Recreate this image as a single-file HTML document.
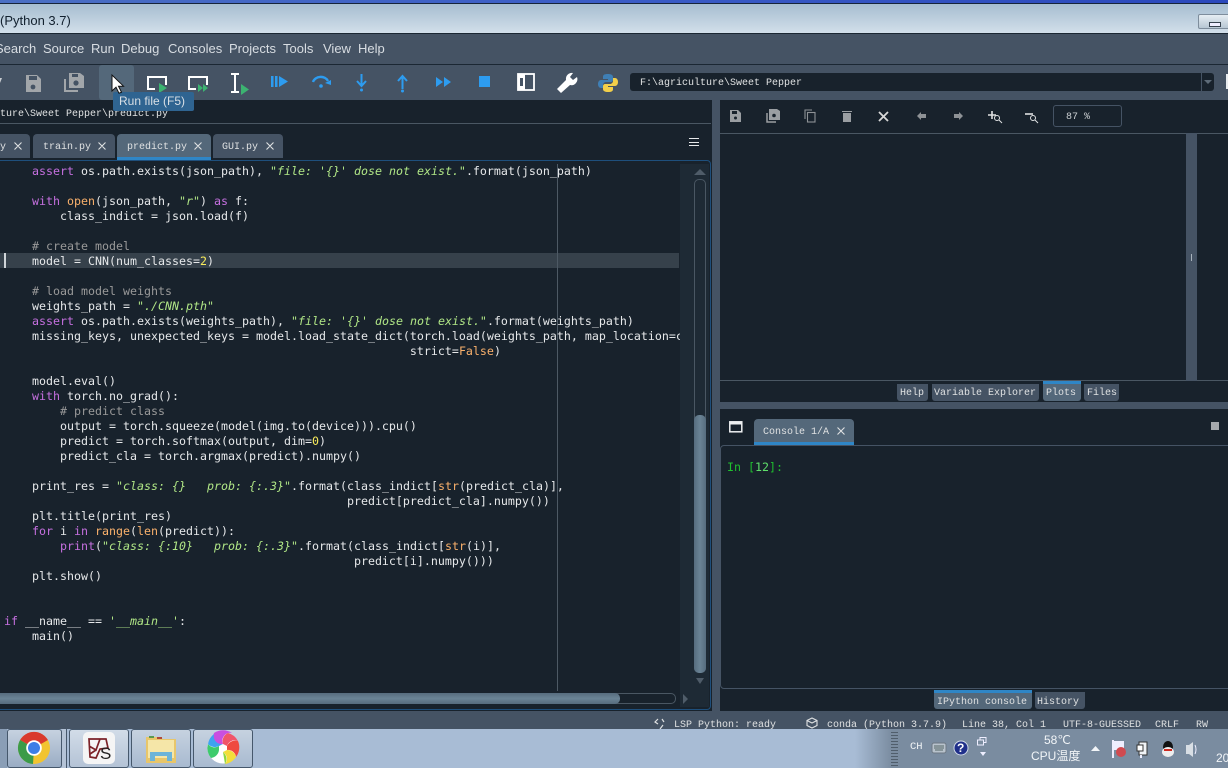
<!DOCTYPE html>
<html><head><meta charset="utf-8"><style>
html,body{margin:0;padding:0;background:#18222c}
body{width:1228px;height:768px;overflow:hidden;position:relative;font-family:"Liberation Sans",sans-serif}
.a{position:absolute}
.m{position:absolute;top:41px;font-size:13px;color:#d8dde2;line-height:15px;white-space:nowrap}
.t{font-family:"Liberation Mono",monospace;font-size:10px;color:#dfe1e2;white-space:pre;position:absolute;line-height:14px;margin-top:2px}
.tab{position:absolute;background:#455364;border-radius:4px 4px 0 0}
.btab{position:absolute;background:#455364;border-radius:0 0 3px 3px;height:17px;top:384px}
pre{margin:0;position:absolute;left:4px;top:164px;font-family:"DejaVu Sans Mono",monospace;font-size:11.63px;line-height:15px;color:#e6e8ea;width:676px;overflow:hidden;height:500px}
i.s{color:#b0e686;font-style:italic}
b.k{color:#c670e0;font-weight:normal}
b.o{color:#fab16c;font-weight:normal}
b.c{color:#999;font-weight:normal}
b.n{color:#faed5c;font-weight:normal}
svg{position:absolute;overflow:visible}
</style></head><body>

<!-- top window strip -->
<div class="a" style="left:0;top:0;width:1228px;height:3px;background:linear-gradient(90deg,#4a6fc4,#3a5cc6 50%,#2a48bc)"></div>
<div class="a" style="left:0;top:3px;width:1228px;height:1px;background:#16243a"></div>
<div class="a" style="left:0;top:4px;width:1228px;height:29px;background:linear-gradient(180deg,#a6bdd0,#d2dfea)"></div>
<div class="a" style="left:0;top:13px;font-size:13px;color:#12202e;line-height:16px">(Python 3.7)</div>
<div class="a" style="left:1198px;top:14px;width:32px;height:15px;border:1px solid #7e8d9c;border-radius:2px;background:linear-gradient(#e6edf3,#b7c6d3);box-sizing:border-box"></div>
<div class="a" style="left:1209px;top:22px;width:10px;height:3px;border:1px solid #36424e;background:#eef"></div>

<!-- menu bar -->
<div class="a" style="left:0;top:33px;width:1228px;height:32px;background:#455364;border-top:1px solid #1b2733;border-bottom:1px solid #1b2733;box-sizing:border-box"></div>
<div class="m" style="left:-5px">Search</div>
<div class="m" style="left:43px">Source</div>
<div class="m" style="left:91px">Run</div>
<div class="m" style="left:121px">Debug</div>
<div class="m" style="left:168px">Consoles</div>
<div class="m" style="left:229px">Projects</div>
<div class="m" style="left:283px">Tools</div>
<div class="m" style="left:323px">View</div>
<div class="m" style="left:358px">Help</div>

<!-- toolbar -->
<div class="a" style="left:0;top:65px;width:1228px;height:35px;background:#455364"></div>
<div class="a" style="left:99px;top:65px;width:35px;height:35px;background:#54687a;border-radius:3px"></div>
<svg style="left:0;top:65px" width="1228" height="35">
<path d="M-2 13h4l-2 5z" fill="#c8ccd0"/>
<path d="M26 10h11l4 4v13H26z" fill="#a2a6aa"/><rect x="29" y="11" width="8" height="4" fill="#455364"/><circle cx="33" cy="22" r="2.4" fill="#455364"/>
<path d="M65 14v12h13" fill="none" stroke="#a2a6aa" stroke-width="2"/><path d="M69 8h11l4 3v12H69z" fill="#a2a6aa"/><circle cx="76" cy="18" r="2.6" fill="#455364"/><rect x="72" y="9" width="6" height="3" fill="#455364"/>
<path d="M155 24h-7V12h18v8" fill="none" stroke="#fff" stroke-width="2"/><path d="M159 18l8 5-8 5z" fill="#3cb371"/>
<path d="M196 24h-7V12h18v8" fill="none" stroke="#fff" stroke-width="2"/><path d="M198 19l5 4-5 4zM203 19l5 4-5 4z" fill="#3cb371"/>
<path d="M231 9h8M235 9v18M231 27h8" fill="none" stroke="#fff" stroke-width="2"/><path d="M241 19l8 5.500-8 5.500z" fill="#3cb371"/>
<path d="M271 11h2.500v11H271zM275 11h2.500v11H275zM279 11l9 5.500-9 5.500z" fill="#2d9cf0"/>
<path d="M313 17a8 7 0 0 1 15-1" fill="none" stroke="#2d9cf0" stroke-width="2.400"/><path d="M325 18l6-3v5z" fill="#2d9cf0"/><circle cx="321" cy="21" r="1.800" fill="#2d9cf0"/>
<path d="M361.500 9v12M357 16l4.500 5 4.500-5" fill="none" stroke="#2d9cf0" stroke-width="2"/><circle cx="361.500" cy="25" r="1.500" fill="#2d9cf0"/>
<path d="M402.500 24V11M398 16l4.500-5 4.500 5" fill="none" stroke="#2d9cf0" stroke-width="2"/><circle cx="402.500" cy="26" r="1.500" fill="#2d9cf0"/>
<path d="M436 12l7 5-7 5zM444 12l7 5-7 5z" fill="#2d9cf0"/>
<rect x="479" y="11" width="11" height="11" fill="#2d9cf0"/>
<rect x="518" y="9" width="16" height="16" fill="none" stroke="#fff" stroke-width="1.800"/><rect x="518" y="9" width="7" height="16" fill="#fff"/><rect x="520" y="13" width="3" height="8" fill="#455364"/>
<path d="M557 25l9-9a6 6 0 0 1 7-7l-3 4 3 3 4-3a6 6 0 0 1-7 8l-9 8z" fill="#fff" transform="translate(0,-1)"/>
<path d="M608 9c-4 0-5 1-5 3v2h5v1h-7c-2 0-3 2-3 4s1 4 3 4h2v-3c0-2 2-3 3-3h5c1 0 2-1 2-2v-3c0-2-2-3-5-3z" fill="#3f7fb5"/>
<path d="M608 27c4 0 5-1 5-3v-2h-5v-1h7c2 0 3-2 3-4s-1-4-3-4h-2v3c0 2-2 3-3 3h-5c-1 0-2 1-2 2v3c0 2 2 3 5 3z" fill="#f2cf4a"/>
</svg>
<div class="a" style="left:630px;top:73px;width:584px;height:18px;background:#18222c;border-radius:3px"></div>
<div class="a" style="left:1201px;top:73px;width:1px;height:18px;background:#455364"></div>
<svg style="left:1204px;top:80px" width="10" height="6"><path d="M0 0h8l-4 4z" fill="#5d6b78"/></svg>
<div class="a" style="left:1226px;top:74px;width:4px;height:15px;background:#e8ecef"></div>
<div class="t" style="left:640px;top:75px">F:\agriculture\Sweet Pepper</div>

<!-- left path bar -->
<div class="a" style="left:0;top:100px;width:711px;height:24px;background:#18222c;border-bottom:1px solid #4a5763;box-sizing:border-box"></div>
<div class="t" style="left:0;top:106px">ture\Sweet Pepper\predict.py</div>
<div class="a" style="left:113px;top:92px;width:81px;height:19px;background:#2f6491;border-radius:2px;color:#d9dfe5;font-size:12px;line-height:18px;text-indent:6px;white-space:nowrap">Run file (F5)</div>
<svg style="left:110px;top:74px" width="16" height="20"><path d="M2 1v16l4-3.800 3 6 2.500-1-3-6h5z" fill="#fff" stroke="#111" stroke-width="1"/></svg>

<!-- tabs -->
<div class="tab" style="left:-8px;top:134px;width:38px;height:24px"></div>
<div class="tab" style="left:33px;top:134px;width:82px;height:24px"></div>
<div class="tab" style="left:117px;top:134px;width:94px;height:24px;background:#54687a"></div>
<div class="a" style="left:117px;top:157px;width:94px;height:3px;background:#2f86c6"></div>
<div class="tab" style="left:213px;top:134px;width:70px;height:24px"></div>
<div class="t" style="left:0;top:139px">y</div><div class="t" style="left:43px;top:139px">train.py</div><div class="t" style="left:127px;top:139px">predict.py</div><div class="t" style="left:222px;top:139px">GUI.py</div>
<svg style="left:0;top:142px" width="290" height="8" stroke="#dfe1e2" stroke-width="1.100" fill="none"><path d="M14.500.5l7 7m0-7l-7 7M98.500.5l7 7m0-7l-7 7M194.500.5l7 7m0-7l-7 7M266.500.5l7 7m0-7l-7 7"/></svg>
<div class="a" style="left:689px;top:138px;width:10px;height:1px;background:#e6e8ea;box-shadow:0 4px 0 #e6e8ea,0 7px 0 #e6e8ea"></div>

<!-- editor -->
<div class="a" style="left:-4px;top:160px;width:715px;height:550px;border:1px solid #1e4f7c;border-radius:4px;box-sizing:border-box"></div>
<div class="a" style="left:680px;top:164px;width:29px;height:543px;background:#1e2a35"></div>
<div class="a" style="left:0;top:253px;width:679px;height:15px;background:#36414b"></div>
<div class="a" style="left:4px;top:253px;width:2px;height:15px;background:#cfd4d8"></div>
<div class="a" style="left:557px;top:164px;width:1px;height:527px;background:#4d5964"></div>
<pre>    <b class="k">assert</b> os.path.exists(json_path), <i class="s">"file: '{}' dose not exist."</i>.format(json_path)

    <b class="k">with</b> <b class="o">open</b>(json_path, <i class="s">"r"</i>) <b class="k">as</b> f:
        class_indict = json.load(f)

    <b class="c"># create model</b>
    model = CNN(num_classes=<b class="n">2</b>)

    <b class="c"># load model weights</b>
    weights_path = <i class="s">"./CNN.pth"</i>
    <b class="k">assert</b> os.path.exists(weights_path), <i class="s">"file: '{}' dose not exist."</i>.format(weights_path)
    missing_keys, unexpected_keys = model.load_state_dict(torch.load(weights_path, map_location=c
                                                          strict=<b class="o">False</b>)

    model.eval()
    <b class="k">with</b> torch.no_grad():
        <b class="c"># predict class</b>
        output = torch.squeeze(model(img.to(device))).cpu()
        predict = torch.softmax(output, dim=<b class="n">0</b>)
        predict_cla = torch.argmax(predict).numpy()

    print_res = <i class="s">"class: {}   prob: {:.3}"</i>.format(class_indict[<b class="o">str</b>(predict_cla)],
                                                 predict[predict_cla].numpy())
    plt.title(print_res)
    <b class="k">for</b> i <b class="k">in</b> <b class="o">range</b>(<b class="o">len</b>(predict)):
        <b class="k">print</b>(<i class="s">"class: {:10}   prob: {:.3}"</i>.format(class_indict[<b class="o">str</b>(i)],
                                                  predict[i].numpy()))
    plt.show()


<b class="k">if</b> __name__ == <i class="s">'__main__'</i>:
    main()</pre>
<!-- scrollbars -->
<svg style="left:694px;top:168px" width="12" height="8"><path d="M0 7l6-6 6 6z" fill="#4f5c69"/></svg>
<div class="a" style="left:694px;top:179px;width:12px;height:494px;border:1px solid #4a5763;border-radius:5px;box-sizing:border-box"></div>
<div class="a" style="left:694px;top:415px;width:12px;height:258px;background:linear-gradient(90deg,#566c7e,#6a8395 50%,#566c7e);border-radius:5px"></div>
<svg style="left:694px;top:677px" width="12" height="8"><path d="M2 1l4 6 4-6z" fill="#4f5c69"/></svg>
<div class="a" style="left:-5px;top:693px;width:681px;height:11px;border:1px solid #4a5763;border-radius:5px;box-sizing:border-box"></div>
<div class="a" style="left:-5px;top:693px;width:625px;height:11px;background:linear-gradient(#566c7e,#6a8395 50%,#566c7e);border-radius:5px"></div>
<svg style="left:683px;top:694px" width="6" height="10"><path d="M0 0l5 5-5 5z" fill="#4f5c69"/></svg>

<!-- splitter -->
<div class="a" style="left:712px;top:100px;width:8px;height:611px;background:#455364"></div>

<!-- plots pane -->
<div class="a" style="left:720px;top:100px;width:508px;height:305px;background:#18222c"></div>
<svg style="left:729px;top:109px" width="320" height="16">
<path d="M1 1h8l3 3v9H1z" fill="#9a9ea2"/><rect x="3" y="2" width="5" height="3" fill="#18222c"/><circle cx="6.500" cy="9" r="1.500" fill="#18222c"/>
<path d="M38 4v9h9" fill="none" stroke="#9a9ea2" stroke-width="1.500"/><path d="M40 0h8l3 2v9H40z" fill="#9a9ea2"/><circle cx="45" cy="6.500" r="1.800" fill="#18222c"/>
<path d="M76 10V1h7" fill="none" stroke="#8e9296" stroke-width="1.100"/><rect x="78.500" y="3.500" width="7.500" height="9.500" fill="none" stroke="#8e9296" stroke-width="1.100"/>
<path d="M114 4h8v9h-8zM113 2h10v1h-10z" fill="#9a9ea2"/>
<path d="M150 3l9 9M159 3l-9 9" stroke="#d8d8d8" stroke-width="1.800" fill="none"/>
<path d="M188 7l4-4v2h5v4h-5v2z" fill="#8e9296"/>
<path d="M234 7l-4-4v2h-5v4h5v2z" fill="#8e9296"/>
<path d="M259 6h8M263 2v8" stroke="#dfe1e2" stroke-width="1.600" fill="none"/><circle cx="268" cy="9" r="2.500" fill="none" stroke="#dfe1e2"/><path d="M270 11l3 3" stroke="#dfe1e2"/>
<path d="M296 5h8" stroke="#dfe1e2" stroke-width="1.600" fill="none"/><circle cx="304" cy="9" r="2.500" fill="none" stroke="#dfe1e2"/><path d="M306 11l3 3" stroke="#dfe1e2"/>
</svg>
<div class="a" style="left:1053px;top:105px;width:69px;height:22px;border:1px solid #455364;border-radius:3px;box-sizing:border-box"></div>
<div class="t" style="left:1066px;top:109px;color:#c9cdd0">87 %</div>
<div class="a" style="left:720px;top:133px;width:508px;height:1px;background:#4a5763"></div>
<div class="a" style="left:720px;top:380px;width:508px;height:1px;background:#4a5763"></div>
<div class="a" style="left:1186px;top:133px;width:11px;height:248px;background:#455364"></div>
<div class="a" style="left:1191px;top:254px;width:1px;height:7px;background:#a9b4bd"></div>

<div class="btab" style="left:897px;width:31px"></div>
<div class="btab" style="left:932px;width:107px"></div>
<div class="btab" style="left:1043px;top:381px;width:38px;height:20px;background:#54687a"></div>
<div class="a" style="left:1043px;top:381px;width:38px;height:3px;background:#2f86c6"></div>
<div class="btab" style="left:1084px;width:35px"></div>
<div class="t" style="left:900px;top:385px">Help</div><div class="t" style="left:934px;top:385px">Variable Explorer</div><div class="t" style="left:1046px;top:385px">Plots</div><div class="t" style="left:1087px;top:385px">Files</div>

<!-- horizontal splitter -->
<div class="a" style="left:720px;top:402px;width:508px;height:7px;background:#455364"></div>

<!-- console -->
<svg style="left:729px;top:421px" width="14" height="12"><rect x=".8" y=".8" width="12" height="10" fill="none" stroke="#eef0f2" stroke-width="1.500"/><rect x="1" y="1" width="12" height="2.500" fill="#eef0f2"/></svg>
<div class="tab" style="left:754px;top:419px;width:100px;height:24px;background:#54687a"></div>
<div class="a" style="left:754px;top:442px;width:100px;height:3px;background:#2f86c6"></div>
<div class="t" style="left:763px;top:424px">Console 1/A</div>
<svg style="left:837px;top:427px" width="8" height="8"><path d="M.5.500l7 7m0-7l-7 7" stroke="#dfe1e2" stroke-width="1.100"/></svg>
<div class="a" style="left:1211px;top:422px;width:8px;height:8px;background:#a5a9ad"></div>
<div class="a" style="left:720px;top:445px;width:520px;height:244px;border:1px solid #455364;border-radius:4px;box-sizing:border-box"></div>
<div class="a" style="left:727px;top:460px;font:11.63px/15px 'DejaVu Sans Mono',monospace;color:#1fbf2f;white-space:pre">In [<span style="color:#5fe06a">12</span>]:</div>
<div class="btab" style="left:934px;top:690px;width:98px;height:19px;background:#54687a"></div>
<div class="a" style="left:934px;top:690px;width:98px;height:3px;background:#2f86c6"></div>
<div class="btab" style="left:1035px;top:692px;width:50px;height:17px"></div>
<div class="t" style="left:937px;top:694px">IPython console</div><div class="t" style="left:1037px;top:694px">History</div>

<!-- status bar -->
<div class="a" style="left:0;top:711px;width:1228px;height:18px;background:#455364;overflow:hidden">
<div class="t" style="left:674px;top:6px">LSP Python: ready</div>
<div class="t" style="left:827px;top:6px">conda (Python 3.7.9)</div>
<div class="t" style="left:962px;top:6px">Line 38, Col 1</div>
<div class="t" style="left:1063px;top:6px">UTF-8-GUESSED</div>
<div class="t" style="left:1155px;top:6px">CRLF</div>
<div class="t" style="left:1196px;top:6px">RW</div>
<svg style="left:653px;top:7px" width="14" height="12" fill="none" stroke="#dfe1e2" stroke-width="1.200"><path d="M5 1L2 4l3 2M9 1l2 3M10 7l-3 4"/></svg>
<svg style="left:806px;top:6px" width="12" height="12" fill="none" stroke="#dfe1e2" stroke-width="1.100"><path d="M6 1l5 2.500v5L6 11 1 8.500v-5zM1 3.500L6 6l5-2.500"/></svg>
</div>

<!-- taskbar -->
<div class="a" style="left:0;top:729px;width:1228px;height:39px;background:linear-gradient(90deg,#a8bcd5 0,#a8bcd5 855px,#7a8ca0 892px,#7a8ca0 100%)"></div>
<div class="a" style="left:0;top:729px;width:7px;height:39px;background:#8a9eb6"></div>
<div class="a" style="left:7px;top:729px;width:55px;height:39px;border:1px solid #46586c;border-radius:3px;box-sizing:border-box;background:linear-gradient(#c6d2e0,#9aadc4)"></div>
<div class="a" style="left:62px;top:729px;width:5px;height:39px;border-right:1px solid #46586c;box-sizing:border-box;background:#b4c3d6"></div>
<div class="a" style="left:69px;top:729px;width:60px;height:39px;border:1px solid #46586c;border-radius:3px;box-sizing:border-box;background:linear-gradient(#d2dce8,#b4c3d6)"></div>
<div class="a" style="left:131px;top:729px;width:60px;height:39px;border:1px solid #46586c;border-radius:3px;box-sizing:border-box;background:linear-gradient(#c6d2e0,#a8bad0)"></div>
<div class="a" style="left:193px;top:729px;width:60px;height:39px;border:1px solid #46586c;border-radius:3px;box-sizing:border-box;background:linear-gradient(#c6d2e0,#a8bad0)"></div>

<svg style="left:18px;top:732px" width="32" height="32" viewBox="-16 -16 32 32">
<circle r="16" fill="#f2c430"/>
<path d="M0 0L-13.900-8A16 16 0 0 1 13.900-8z" fill="#d93a2e"/>
<path d="M0 0L-13.900-8A16 16 0 0 0-1 16z" fill="#3c9b48"/>
<circle r="7.800" fill="#fff"/><circle r="6" fill="#3d7ee6"/>
</svg>
<div class="a" style="left:83px;top:732px;width:32px;height:32px;background:#f5f5f5;border-radius:5px"></div>
<svg style="left:87px;top:736px" width="24" height="26" fill="none" stroke="#7c2228" stroke-width="1.700"><path d="M2 3h17l2 9-8 1-4 9-6-1zM2 10l7 4 4-11M9 14l-6 4"/></svg>
<div class="a" style="left:100px;top:744px;font-size:17px;line-height:20px;color:#222;font-family:'Liberation Sans',sans-serif">S</div>
<svg style="left:145px;top:734px" width="32" height="30"><path d="M1 3h14l3 2h13v24H1z" fill="#e8c66a"/><rect x="3" y="6" width="26" height="18" fill="#f5e6a8"/><rect x="4" y="2" width="5" height="2" fill="#5a9a50"/><rect x="12" y="3" width="5" height="2" fill="#b04a3a"/><path d="M5 27v-9h22v9h-5v-5H10v5z" fill="#6cb4d8"/></svg>
<svg style="left:207px;top:732px" width="32" height="32" viewBox="-16 -16 32 32">
<circle r="15.500" fill="#fff"/>
<path d="M0-4A8 8 0 0 1-9-15 16 16 0 0 1 9-15 8 8 0 0 0 0-4z" fill="#c94fe0"/>
<path d="M0-4A9 9 0 0 1 5-15 16 16 0 0 1 15-7 8 8 0 0 0 4-2z" fill="#f0556a"/>
<path d="M4-2A9 9 0 0 1 15-7 16 16 0 0 1 13 9 8 8 0 0 0 4 2z" fill="#ef4a40"/>
<path d="M4 2A9 9 0 0 1 13 9 16 16 0 0 1 2 16 8 8 0 0 0 0 4z" fill="#f3de3a"/>
<path d="M0 4A9 9 0 0 1 2 16 16 0 0 1-12 10 8 8 0 0 0-4 2z" fill="#8ed83f"/>
<path d="M-4 2A9 9 0 0 1-12 10 16 16 0 0 1-15-4 8 8 0 0 0-4-2z" fill="#3ecb6c"/>
<path d="M-4-2A9 9 0 0 1-15-4 16 16 0 0 1-9-14 8 8 0 0 0 0-4z" fill="#3fa3f0"/>
</svg>

<!-- tray -->
<div class="a" style="left:891px;top:732px;width:7px;height:36px;background:repeating-linear-gradient(180deg,#45525f 0,#45525f 1px,transparent 1px,transparent 3px);opacity:.8"></div>
<div class="a" style="left:910px;top:740px;font:10.500px/14px 'Liberation Mono',monospace;color:#f0f3f6">CH</div>
<svg style="left:931px;top:740px" width="60" height="18"><rect x="1" y="3" width="14" height="10" rx="2" fill="#b8c2cc" stroke="#6d7883"/><path d="M3 6h10M3 8h10M4 10h8" stroke="#566"/><circle cx="30" cy="8" r="7" fill="#1f2f8a" stroke="#cfd7e6"/></svg>
<div class="a" style="left:957px;top:741px;font:bold 12px/14px 'Liberation Sans',sans-serif;color:#fff">?</div>
<svg style="left:977px;top:737px" width="12" height="22"><rect x="3" y="0.500" width="6" height="5" fill="none" stroke="#eef"/><rect x=".5" y="3" width="6" height="5" fill="#7a8c9f" stroke="#eef"/><path d="M3 15h6l-3 4z" fill="#eef"/></svg>
<div class="a" style="left:1044px;top:733px;font-size:12px;line-height:15px;color:#f2f5f8">58℃</div>
<div class="a" style="left:1031px;top:748px;font:12px/16px 'Liberation Sans','Noto Sans CJK SC',sans-serif;color:#f2f5f8;white-space:nowrap">CPU温度</div>
<svg style="left:1091px;top:746px" width="10" height="6"><path d="M0 5l4.500-5L9 5z" fill="#f2f5f8"/></svg>
<svg style="left:1110px;top:739px" width="100" height="22">
<path d="M3 1v18" stroke="#eef" stroke-width="2"/><path d="M4 2h10v9H4z" fill="#eef"/><circle cx="11" cy="13" r="5" fill="#d04a50"/>
<path d="M29 3h8v13h-8z" fill="#f0f3f6" stroke="#333"/><path d="M27 6h6v6h-6z" fill="#fff" stroke="#333"/><path d="M31 16v3" stroke="#eef" stroke-width="2"/>
<ellipse cx="58" cy="8" rx="5" ry="6" fill="#111"/><ellipse cx="58" cy="13" rx="6" ry="5" fill="#eee"/><path d="M54 10h8v2h-8z" fill="#d02a20"/>
<path d="M76 6h3l4-3v15l-4-3h-3z" fill="#d8dee4"/><path d="M85 6q2 4.500 0 9" fill="none" stroke="#eef"/>
</svg>
<div class="a" style="left:1216px;top:751px;font-size:12px;line-height:15px;color:#f2f5f8">20</div>
</body></html>
